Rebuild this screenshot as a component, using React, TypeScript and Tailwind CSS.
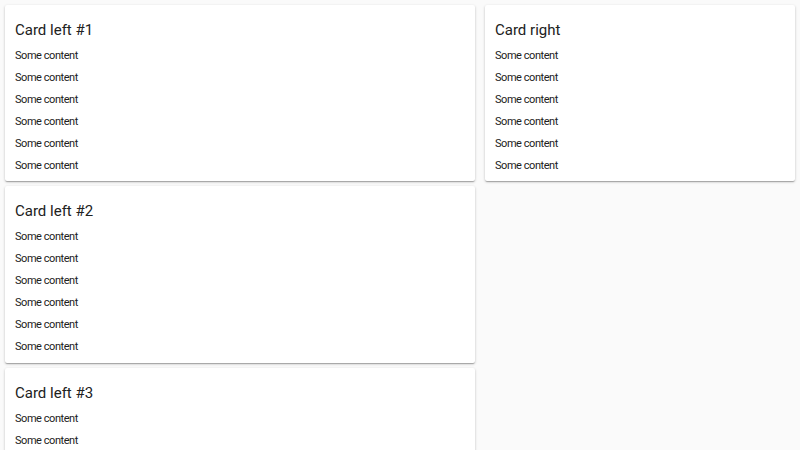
const lines = Array.from({ length: 6 }, () => "Some content");

function Card({ title }: { title: string }) {
  return (
    <div className="rounded-[2px] bg-white px-[10px] pt-[10px] pb-[5px] shadow-[0_1px_3px_rgba(0,0,0,0.2),0_1px_1px_rgba(0,0,0,0.14),0_2px_1px_-1px_rgba(0,0,0,0.12)]">
      <h2 className="text-[15px] leading-[30px] font-normal text-[#212121]">{title}</h2>
      {lines.map((line, i) => (
        <p key={i} className="text-[11px] leading-[21.9px] tracking-[-0.45px] text-[#212121]">
          {line}
        </p>
      ))}
    </div>
  );
}

export default function App() {
  return (
    <div className="min-h-screen bg-[#fafafa] font-['Roboto',sans-serif]">
      <div className="flex items-start gap-[10px] p-[5px]">
        <div className="flex w-[470px] flex-col gap-[5px]">
          <Card title="Card left #1" />
          <Card title="Card left #2" />
          <Card title="Card left #3" />
        </div>
        <div className="flex w-[310px] flex-col gap-[5px]">
          <Card title="Card right" />
        </div>
      </div>
    </div>
  );
}
